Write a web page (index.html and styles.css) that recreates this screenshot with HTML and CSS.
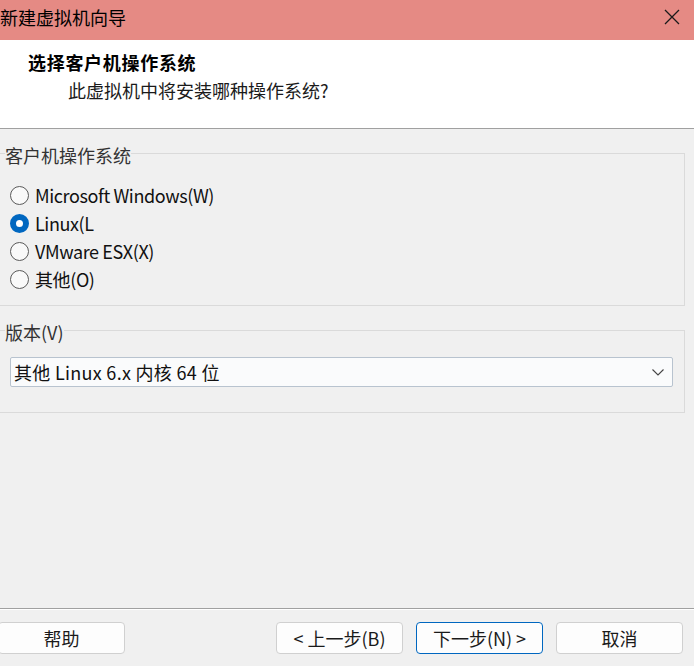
FILE: index.html
```html
<!DOCTYPE html>
<html lang="zh-CN">
<head>
<meta charset="utf-8">
<title>新建虚拟机向导</title>
<link rel="stylesheet" href="styles.css">
</head>
<body>
<div class="window">
  <div class="titlebar">
    <span class="title">新建虚拟机向导</span>
    <svg class="close" width="16" height="16" viewBox="0 0 16 16"><path d="M1 1 L15 15 M15 1 L1 15" stroke="#1a1a1a" stroke-width="1.3" fill="none"/></svg>
  </div>
  <div class="header">
    <div class="heading">选择客户机操作系统</div>
    <div class="subheading">此虚拟机中将安装哪种操作系统?</div>
  </div>
  <div class="content">
    <fieldset class="group group-os">
      <legend>客户机操作系统</legend>
      <label class="radio-row"><span class="radio"></span><span class="radio-text">Microsoft Windows(W)</span></label>
      <label class="radio-row"><span class="radio checked"></span><span class="radio-text">Linux(L</span></label>
      <label class="radio-row"><span class="radio"></span><span class="radio-text">VMware ESX(X)</span></label>
      <label class="radio-row"><span class="radio"></span><span class="radio-text">其他(O)</span></label>
    </fieldset>
    <fieldset class="group group-ver">
      <legend>版本(V)</legend>
      <div class="select">
        <span class="select-text">其他 Linux 6.x 内核 64 位</span>
        <svg class="chevron" width="12" height="7" viewBox="0 0 12 7"><path d="M0.5 0.5 L6 6 L11.5 0.5" stroke="#444" stroke-width="1.1" fill="none"/></svg>
      </div>
    </fieldset>
  </div>
  <div class="footer">
    <button class="btn btn-help">帮助</button>
    <div class="spacer"></div>
    <button class="btn">&lt; 上一步(B)</button>
    <button class="btn btn-default">下一步(N) &gt;</button>
    <button class="btn">取消</button>
  </div>
</div>
</body>
</html>
```
FILE: styles.css
```css
* { box-sizing: border-box; }
html, body { margin: 0; padding: 0; }
body {
  background: #f0f0f0;
  font-family: "Noto Sans CJK SC", "Noto Sans", sans-serif;
  font-size: 18px;
  color: #1a1a1a;
}
.window {
  width: 694px;
  height: 666px;
  display: flex;
  flex-direction: column;
  overflow: hidden;
}
.titlebar {
  height: 40px;
  flex: none;
  background: #e58a84;
  display: flex;
  align-items: center;
  justify-content: space-between;
  padding: 0 14px 6px 0;
}
.title { font-size: 18px; line-height: 24px; color: #000; }
.close { width: 16px; height: 16px; }
.header {
  flex: none;
  height: 89px;
  background: #fff;
  border-bottom: 1px solid #a0a0a0;
  padding: 10px 0 0 28px;
}
.heading { font-weight: bold; line-height: 24px; color: #000; letter-spacing: 0.7px; }
.subheading { line-height: 24px; margin-top: 4px; padding-left: 40px; color: #1a1a1a; }
.content { flex: 1; }
.group {
  margin: 12px 9px 0 -1px;
  border: 1px solid #dadada;
  padding: 0 11px 0 10px;
  min-width: 0;
}
.group legend {
  padding: 4px 0 0 0;
  margin-left: -5px;
  line-height: 20px;
  color: #333;
}
.group-os { padding-top: 16px; padding-bottom: 12px; }
.radio-row {
  display: flex;
  align-items: center;
  height: 28px;
  gap: 6px;
}
.radio-text { letter-spacing: -0.4px; color: #111; }
.radio {
  width: 19px;
  height: 19px;
  border-radius: 50%;
  border: 1px solid #5a5a5a;
  background: #f9f9f9;
  flex: none;
}
.radio.checked {
  border: 6px solid #0067c0;
  background: #fff;
}
.group-ver { padding-top: 15px; padding-bottom: 25px; }
.select {
  height: 30px;
  background: #fafbfc;
  border: 1px solid #b8c3cf;
  border-radius: 2px;
  display: flex;
  align-items: center;
  justify-content: space-between;
  padding: 0 8px 0 3px;
}
.select-text { line-height: 24px; letter-spacing: 0.3px; color: #111; }
.footer {
  flex: none;
  border-top: 1px solid #a0a0a0;
  box-shadow: inset 0 1px 0 #ffffff;
  padding: 13px 11px 12px 0;
  display: flex;
  gap: 13px;
}
.spacer { flex: 1; }
.btn {
  width: 127px;
  height: 32px;
  background: #fdfdfd;
  border: 1px solid #d0d0d0;
  border-radius: 4px;
  font-family: inherit;
  font-size: 18px;
  color: #1a1a1a;
  padding: 0;
}
.btn-help { margin-left: -2px; }
.btn-default { border-color: #0067c0; }
```
